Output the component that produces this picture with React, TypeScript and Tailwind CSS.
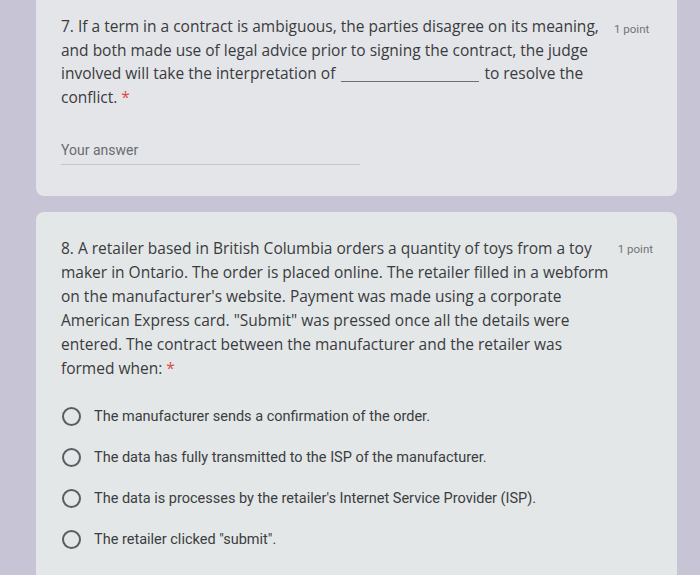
import React from "react";

const Radio = ({ label }: { label: string }) => (
  <div className="flex h-[41px] items-center">
    <div className="ml-[1px] h-[19px] w-[19px] rounded-full border-2 border-[#5a5e63]" />
    <span className="ml-[13px] text-[14.5px] text-[#3b3d40]" style={{ fontFamily: "Roboto, sans-serif" }}>
      {label}
    </span>
  </div>
);

export default function App() {
  const qFont = { fontFamily: "'Open Sans', 'Noto Sans', sans-serif" };
  return (
    <div className="h-[575px] w-[700px] overflow-hidden bg-[#c6c4d5]">
      <div className="ml-[36px] w-[641px]">
        {/* Card 7 */}
        <div className="h-[196px] rounded-b-[8px] bg-[#e3e5e8] pl-[25px] pr-[24px] pt-[15px]">
          <div className="flex">
            <div className="w-[553px] text-[15.5px] leading-[23.5px] text-[#3a3b3e]" style={qFont}>
              <div className="whitespace-nowrap">7. If a term in a contract is ambiguous, the parties disagree on its meaning,</div>
              <div className="whitespace-nowrap">and both made use of legal advice prior to signing the contract, the judge</div>
              <div className="flex whitespace-nowrap">
                <span>involved will take the interpretation of</span>
                <span className="ml-[6px] mb-[4px] inline-block w-[138px] border-b border-[#6d6f73]" />
                <span className="ml-[5px]">to resolve the</span>
              </div>
              <div className="whitespace-nowrap">
                conflict. <span className="text-[#dc4a45]">*</span>
              </div>
            </div>
            <div className="mt-[6px] whitespace-nowrap text-[11.5px] text-[#727478]" style={{ fontFamily: "Roboto, sans-serif" }}>
              1 point
            </div>
          </div>
          <div className="mt-[31px] w-[299px] border-b border-[#c3c5c8] pb-[3px] text-[14px] text-[#6a6c70]" style={{ fontFamily: "Roboto, sans-serif" }}>
            Your answer
          </div>
        </div>

        {/* Card 8 */}
        <div className="mt-[16px] h-[400px] rounded-t-[8px] bg-[#e3e7e8] pl-[25px] pr-[24px] pt-[24px]">
          <div className="flex">
            <div className="w-[558px] text-[15.5px] leading-[24px] text-[#3a3b3e]" style={qFont}>
              <div className="whitespace-nowrap">8. A retailer based in British Columbia orders a quantity of toys from a toy</div>
              <div className="whitespace-nowrap">maker in Ontario. The order is placed online. The retailer filled in a webform</div>
              <div className="whitespace-nowrap">on the manufacturer's website. Payment was made using a corporate</div>
              <div className="whitespace-nowrap">American Express card. "Submit" was pressed once all the details were</div>
              <div className="whitespace-nowrap">entered. The contract between the manufacturer and the retailer was</div>
              <div className="whitespace-nowrap">
                formed when: <span className="text-[#dc4a45]">*</span>
              </div>
            </div>
            <div className="mt-[5px] whitespace-nowrap text-[11.5px] text-[#727478]" style={{ fontFamily: "Roboto, sans-serif" }}>
              1 point
            </div>
          </div>
          <div className="mt-[16px] flex flex-col">
            <Radio label="The manufacturer sends a confirmation of the order." />
            <Radio label="The data has fully transmitted to the ISP of the manufacturer." />
            <Radio label="The data is processes by the retailer's Internet Service Provider (ISP)." />
            <Radio label={'The retailer clicked "submit".'} />
          </div>
        </div>
      </div>
    </div>
  );
}
